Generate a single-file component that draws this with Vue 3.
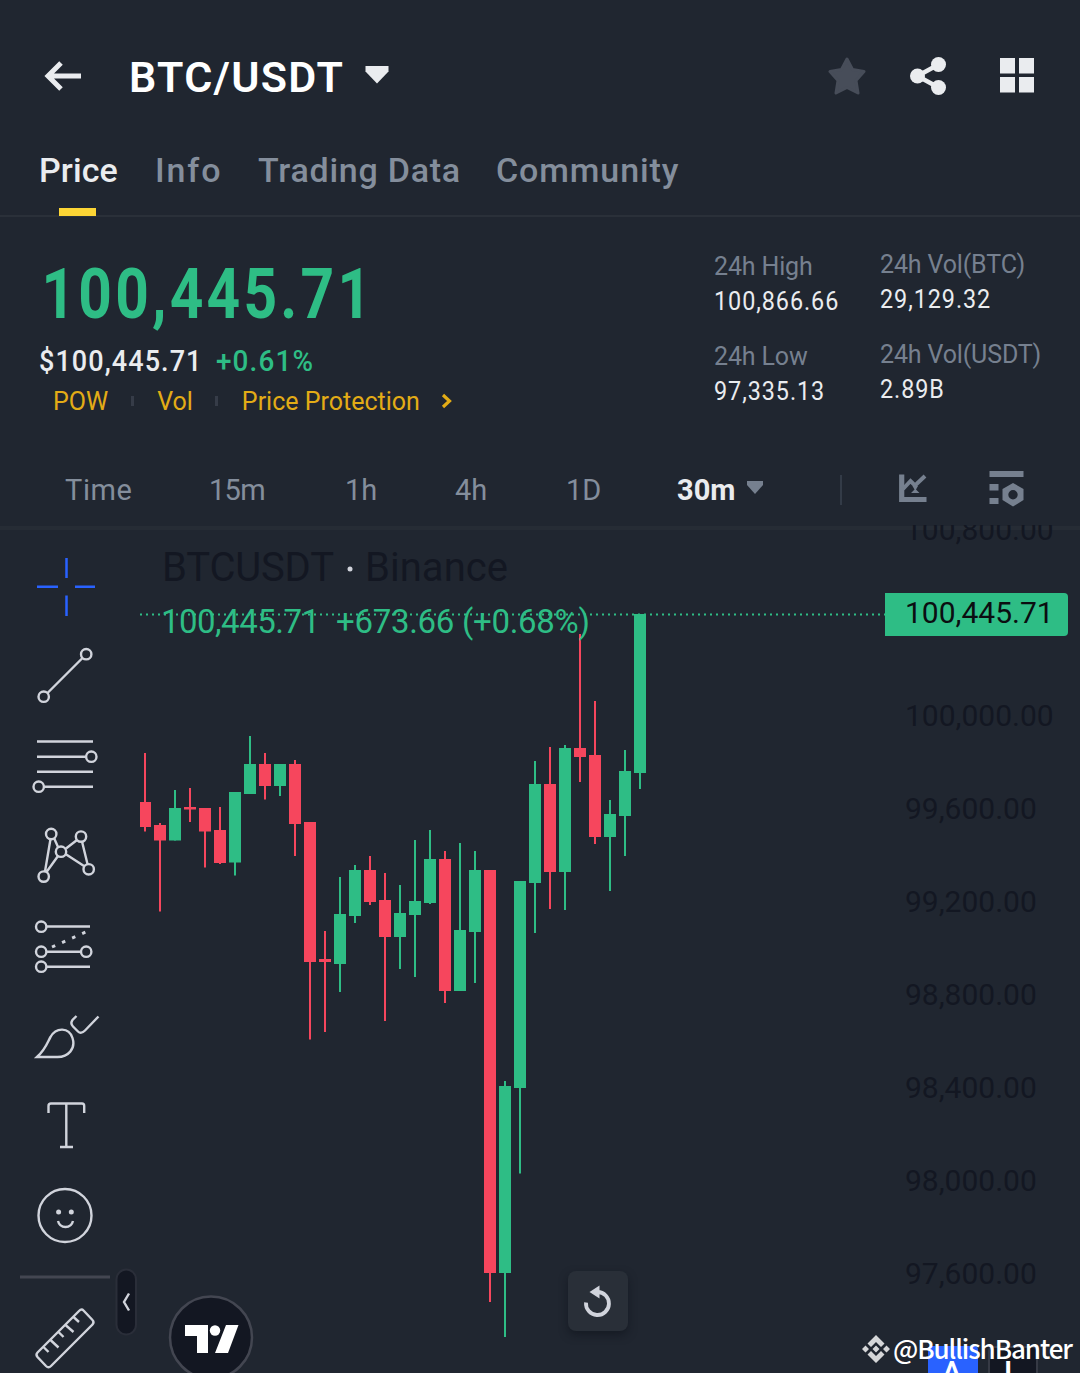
<template>
  <div class="screen">
    <header class="header">
      <svg class="back" width="38" height="32" viewBox="0 0 38 32">
        <path d="M17 3 L4 16 L17 29 M4 16 H37" fill="none" stroke="#eaecef" stroke-width="5" />
      </svg>
      <h1 class="pair">BTC/USDT</h1>
      <svg class="pair-caret" width="24" height="19" viewBox="0 0 24 19">
        <path d="M0.500 1 H23.500 V6.500 L12 18.500 L0.500 6.500 Z" fill="#eaecef" />
      </svg>
      <div class="actions">
        <svg width="38" height="40" viewBox="0 0 38 40">
          <path d="M19 3 L24.500 13.500 L36 15.500 L28 24.500 L30 37 L19 31.500 L8 37 L10 24.500 L2 15.500 L13.500 13.500 Z" fill="#474d59" stroke="#474d59" stroke-width="3" stroke-linejoin="round" />
        </svg>
        <svg width="36" height="38" viewBox="0 0 36 38">
          <path d="M28.500 7.500 L7.500 19 L28.500 30.500" fill="none" stroke="#eaecef" stroke-width="4.500" />
          <circle cx="28.500" cy="7.500" r="7.500" fill="#eaecef" />
          <circle cx="7.500" cy="19" r="7.500" fill="#eaecef" />
          <circle cx="28.500" cy="30.500" r="7.500" fill="#eaecef" />
        </svg>
        <svg class="grid-icon" width="34" height="35" viewBox="0 0 34 35">
          <path d="M0 0 H15 V15.500 H0 Z M19 0 H34 V15.500 H19 Z M0 19 H15 V34.500 H0 Z M19 19 H34 V34.500 H19 Z" fill="#eaecef" />
        </svg>
      </div>
    </header>

    <nav class="tabs">
      <a v-for="tab in tabs" :key="tab.name" :class="['tab', tab.cls, { active: tab.name === 'Price' }]">{{ tab.name }}</a>
    </nav>

    <section class="ticker">
      <div class="ticker-main">
        <div class="price">100,445.71</div>
        <div class="fiat">
          <span class="usd">$100,445.71</span>
          <span class="change">+0.61%</span>
        </div>
        <div class="tags">
          <span>POW</span>
          <i></i>
          <span>Vol</span>
          <i></i>
          <span>Price Protection</span>
          <svg width="12" height="16" viewBox="0 0 12 16">
            <path d="M2 2 L8.500 8 L2 14" fill="none" stroke="#e3ac16" stroke-width="3.200" />
          </svg>
        </div>
      </div>
      <div class="stats">
        <div v-for="(column, index) in stats" :key="index" class="stat-column">
          <dl v-for="stat in column" :key="stat.label">
            <dt>{{ stat.label }}</dt>
            <dd>{{ stat.value }}</dd>
          </dl>
        </div>
      </div>
    </section>

    <div class="intervals">
      <span class="interval i-time">Time</span>
      <span class="interval i-15m">15m</span>
      <span class="interval i-1h">1h</span>
      <span class="interval i-4h">4h</span>
      <span class="interval i-1d">1D</span>
      <span class="interval i-30m">30m</span>
      <svg class="caret" width="16" height="13" viewBox="0 0 16 13">
        <path d="M0 0 H16 V4 L8 13 L0 4 Z" fill="#76808f" />
      </svg>
      <i class="divider"></i>
      <svg class="chart-icon" width="28" height="29" viewBox="0 0 28 29">
        <path d="M2.700 0.500 V25.500 H27.500" fill="none" stroke="#76808f" stroke-width="5.200" />
        <path d="M4 15 L11.500 7 L16 11.500 L26 2" fill="none" stroke="#76808f" stroke-width="4" />
        <path d="M13.500 12 H19 L17 15.500 L20.500 19 H12 L15.500 15.500 Z" fill="#76808f" />
      </svg>
      <svg class="settings-icon" width="36" height="36" viewBox="0 0 36 36">
        <path d="M0.500 0 H34.500 V6 H0.500 Z M0.500 13 H9.500 V19.500 H0.500 Z M0.500 27 H9.500 V33 H0.500 Z" fill="#76808f" />
        <path fill-rule="evenodd" d="M24 12 L34.500 18 V29 L24 35.500 L13.500 29 V18 Z M24 19 A4.700 4.700 0 1 0 24 28.400 A4.700 4.700 0 1 0 24 19 Z" fill="#76808f" />
      </svg>
    </div>

    <main class="chart">
      <aside class="tools">
        <svg width="138" height="843" viewBox="0 530 138 843" fill="none" stroke="#d1d4dc" stroke-width="2.400">
          <!-- crosshair -->
          <path d="M66.500 558 V578 M66.500 595.500 V616 M37 586.800 H58 M75 586.800 H95" stroke="#2962ff" stroke-width="2.500" />

          <!-- trend line -->
          <path d="M47.500 693 L82.500 658" />
          <circle cx="43.700" cy="696.700" r="5.200" />
          <circle cx="86.200" cy="654.200" r="5.200" />

          <!-- fib retracement -->
          <path d="M37 741.500 H93 M37 756.700 H86 M37 771.700 H93 M44 786.700 H93" />
          <circle cx="91.300" cy="756.700" r="5.200" />
          <circle cx="38.700" cy="786.700" r="5.200" />

          <!-- pattern -->
          <path d="M50.500 839 L45 871.500 M54 838 L58 847 M58 856 L46.500 872 M66 848.500 L77 840 M65.500 854 L84 866 M82 841.500 L87.500 864" />
          <circle cx="51.200" cy="834" r="5.200" />
          <circle cx="81" cy="836.600" r="5.200" />
          <circle cx="61" cy="851.700" r="5.200" />
          <circle cx="43.700" cy="876.600" r="5.200" />
          <circle cx="88.700" cy="869.300" r="5.200" />

          <!-- projection -->
          <path d="M46.500 926.500 H90 M46.500 951.800 H81 M46.500 966.700 H90" />
          <path d="M52 947 L88 931" stroke-width="3" stroke-dasharray="3.500 7.500" />
          <circle cx="41.200" cy="926.700" r="5.200" />
          <circle cx="41.200" cy="951.700" r="5.200" />
          <circle cx="86.200" cy="951.700" r="5.200" />
          <circle cx="41.200" cy="966.700" r="5.200" />

          <!-- brush -->
          <path d="M37 1057 C46 1049 48 1041 50.500 1037 C56 1027 69 1027 72.500 1038 C76 1049 68 1057 57.500 1057 Z M76.500 1016 L72.500 1020 Q70 1023.500 73 1026.500 L78 1031.500 Q81 1034.500 85 1030.500 L98.500 1016.500" />

          <!-- text -->
          <path d="M48.500 1113 V1106 Q48.500 1103.500 51 1103.500 H82 Q84.200 1103.500 84.200 1106 V1113 M66.300 1104 V1146.500 M60 1147 H73" />

          <!-- emoji -->
          <circle cx="65" cy="1215.500" r="26.500" />
          <path d="M58 1221 C60 1229 71 1229 73 1221" />
          <circle cx="58.600" cy="1212" r="2.500" fill="#d1d4dc" stroke="none" />
          <circle cx="71.300" cy="1212" r="2.500" fill="#d1d4dc" stroke="none" />

          <!-- ruler -->
          <path d="M20 1277 H110" stroke="#434651" stroke-width="3" />
          <path d="M37.500 1352.500 Q35.500 1354.500 37.500 1357 L46 1366 Q48.500 1368.500 51 1366 L92.500 1324.500 Q94.500 1322 92.500 1320 L83.500 1310.500 Q81.500 1308.500 79 1311 Z M43.500 1347 L48.500 1352 M50.500 1340 L58.500 1347.500 M58.500 1332 L63.500 1337 M65.500 1325 L73.500 1332 M73.500 1317 L79 1322" />

          <!-- collapse handle -->
          <rect x="116.500" y="1269.500" width="19.500" height="65" rx="9.750" fill="#131722" stroke="#2a2e39" stroke-width="2" />
          <path d="M129 1293.500 L124 1302 L129 1310.500" />
        </svg>
      </aside>

      <svg class="plot" width="950" height="848" viewBox="130 525 950 848">
        <path d="M140 614.500 H885" stroke="#2ebd85" stroke-width="2" stroke-dasharray="2 4" />
        <g v-for="candle in candles" :key="candle.x" :fill="candle.up ? '#2ebd85' : '#f6465d'">
          <rect :x="candle.x - 1" :y="candle.high" width="2" :height="candle.low - candle.high" />
          <rect :x="candle.left" :y="candle.top" :width="candle.x + 6 - candle.left" :height="candle.bottom - candle.top" />
        </g>

        <g class="legend">
          <text class="symbol" x="162" y="580.500" textLength="172">BTCUSDT</text>
          <circle cx="350" cy="569" r="2.500" fill="#d1d4dc" />
          <text class="symbol" x="365" y="580.500" textLength="143">Binance</text>
          <text class="quote" x="161" y="632.500" textLength="159">100,445.71</text>
          <text class="quote" x="336" y="632.500" textLength="254">+673.66 (+0.68%)</text>
        </g>

        <g class="axis">
          <text v-for="label in axis" :key="label.text" x="905" :y="label.y">{{ label.text }}</text>
          <path d="M885 593 H1064 Q1068 593 1068 597 V632 Q1068 636 1064 636 H885 Z" fill="#2ebd85" />
          <text class="last" x="905" y="622.500">100,445.71</text>
        </g>

        <circle cx="211" cy="1337.500" r="41" fill="#131722" stroke="#434651" stroke-width="2.500" />
        <path d="M185 1325 H208 V1353 H197 V1336 H185 Z M226 1325 H238.500 L228 1353 H215 Z" fill="#fff" />
        <circle cx="215" cy="1330.500" r="5.200" fill="#fff" />

        <g class="mode">
          <rect x="928" y="1346" width="50" height="34" rx="4" fill="#2962ff" />
          <rect x="989" y="1347" width="48" height="34" rx="4" fill="#131722" stroke="#363a45" stroke-width="2" />
          <text x="941.500" y="1383">A</text>
          <text x="1004" y="1383">L</text>
        </g>

        <g class="watermark">
          <g fill="#d5d6d8">
            <path d="M876 1335 L884.500 1343.500 L881 1347 L876 1342 L871 1347 L867.500 1343.500 Z" />
            <path d="M876 1363 L884.500 1354.500 L881 1351 L876 1356 L871 1351 L867.500 1354.500 Z" />
            <path d="M876 1345.500 L879.500 1349 L876 1352.500 L872.500 1349 Z M865.500 1345.500 L869 1349 L865.500 1352.500 L862 1349 Z M886.500 1345.500 L890 1349 L886.500 1352.500 L883 1349 Z" />
          </g>
          <text x="893" y="1358.500" textLength="180">@BullishBanter</text>
        </g>
      </svg>

      <button class="reset">
        <svg width="30" height="34" viewBox="0 0 30 34">
          <path d="M3 18.500 A11.500 11.500 0 1 0 14.500 8" fill="none" stroke="#d1d4dc" stroke-width="3.800" />
          <path d="M6.500 8 L16.500 1.500 V14.500 Z" fill="#d1d4dc" />
        </svg>
      </button>
    </main>
  </div>
</template>

<script setup>
const tabs = [
  { name: 'Price', cls: 'tab-price' },
  { name: 'Info', cls: 'tab-info' },
  { name: 'Trading Data', cls: 'tab-data' },
  { name: 'Community', cls: 'tab-community' }
]

const stats = [
  [
    { label: '24h High', value: '100,866.66' },
    { label: '24h Low', value: '97,335.13' }
  ],
  [
    { label: '24h Vol(BTC)', value: '29,129.32' },
    { label: '24h Vol(USDT)', value: '2.89B' }
  ]
]

// up, high, body top, body bottom, low
const series = [
  [0, 753, 802, 827, 831.5],
  [0, 823, 825, 840.5, 911.5],
  [1, 790, 808, 840.5, 840.5],
  [0, 788, 807, 809.5, 822],
  [0, 808, 808, 831.5, 867.5],
  [0, 807, 830, 863, 864],
  [1, 792, 792, 862.5, 875.5],
  [1, 736, 764, 794, 794],
  [0, 753, 764, 786, 799.5],
  [1, 764, 764, 786, 796],
  [0, 760, 764, 824, 856],
  [0, 822, 822, 962, 1039.5],
  [0, 931, 959, 962, 1032],
  [1, 877, 914, 964, 992],
  [1, 865, 870, 916, 923],
  [0, 856, 870, 902, 905],
  [0, 873, 900, 937, 1021],
  [1, 885, 913, 937, 969],
  [1, 840, 901, 915, 977],
  [1, 830, 859, 903, 904],
  [0, 851, 859, 991, 1003],
  [1, 843, 930, 991, 991],
  [1, 851, 870, 932, 983],
  [0, 870, 870, 1273, 1302],
  [1, 1081, 1086, 1273, 1337],
  [1, 881, 881, 1088, 1173.5],
  [1, 761, 784, 883, 933],
  [0, 747, 784, 872, 909],
  [1, 745, 748, 872, 910],
  [0, 634, 748, 757, 782],
  [0, 701, 755, 837, 844],
  [1, 800, 814, 837, 891],
  [1, 750, 771, 816, 856],
  [1, 614, 614, 773, 789]
]

const candles = series.map(([up, high, top, bottom, low], index) => {
  const x = 145 + index * 15
  return { x, up, high, top, bottom, low, left: Math.max(x - 6, 140) }
})

const axis = [
  { text: '100,800.00', y: 539.5 },
  { text: '100,000.00', y: 725.5 },
  { text: '99,600.00', y: 818.5 },
  { text: '99,200.00', y: 911.5 },
  { text: '98,800.00', y: 1004.5 },
  { text: '98,400.00', y: 1097.5 },
  { text: '98,000.00', y: 1190.5 },
  { text: '97,600.00', y: 1283.5 }
]
</script>

<style>
body {
  background: #202630;
}
</style>

<style scoped>
* {
  box-sizing: border-box;
}

.screen {
  width: 1080px;
  height: 1373px;
  overflow: hidden;
  background: #202630;
  color: #eaecef;
  font-family: Roboto, "Liberation Sans", sans-serif;
}

svg {
  display: block;
  flex: none;
}

/* header */
.header {
  display: flex;
  align-items: center;
  height: 152px;
  padding: 0 46px 0 44px;
}

.pair {
  width: 235px;
  margin: 2px 0 0 47px;
  color: #fff;
  font-size: 43px;
  font-weight: 600;
  letter-spacing: 1.3px;
  white-space: nowrap;
}

.pair-caret {
  margin: -3px 0 0 1px;
}

.actions {
  display: flex;
  align-items: center;
  gap: 44px;
  margin: -1px 0 0 auto;
}

.grid-icon {
  margin-left: 10px;
}

/* tabs */
.tabs {
  display: flex;
  height: 65px;
  padding-left: 39px;
  border-bottom: 2px solid #2a3039;
}

.tab {
  position: relative;
  color: #848e9c;
  font-size: 34px;
  font-weight: 500;
  line-height: 37px;
  white-space: nowrap;
}

.tab-price { width: 116px; letter-spacing: 0.1px; }
.tab-info { width: 103px; letter-spacing: 1.9px; }
.tab-data { width: 238px; letter-spacing: 0.75px; }
.tab-community { letter-spacing: 0.9px; }

.tab.active {
  color: #eaecef;
}

.tab.active::after {
  content: "";
  position: absolute;
  left: 20px;
  bottom: -1px;
  width: 37px;
  height: 8px;
  background: #fcd535;
}

/* ticker */
.ticker {
  display: flex;
  justify-content: space-between;
  height: 237px;
}

.ticker-main {
  width: 500px;
  padding: 33px 0 0 39px;
}

.price {
  height: 90px;
  padding-left: 3px;
  color: #2ebd85;
  font-size: 71px;
  font-weight: 700;
  line-height: 88px;
  letter-spacing: 3.9px;
  transform: scaleX(0.826);
  transform-origin: left;
}

.fiat {
  display: flex;
  height: 42px;
  font-size: 30px;
  font-weight: 500;
  line-height: 42px;
  letter-spacing: 1.2px;
}

.fiat span {
  transform: scaleX(0.9);
  transform-origin: left;
}

.usd {
  width: 177px;
  white-space: nowrap;
}

.fiat .change {
  color: #2ebd85;
  transform: scaleX(0.93);
}

.tags {
  display: flex;
  align-items: center;
  height: 38px;
  padding-left: 14px;
  color: #e3ac16;
  font-size: 25px;
}

.tags i {
  width: 3px;
  height: 10px;
  margin: 0 23.5px 0 22.5px;
  background: #363c48;
}

.tags svg {
  margin-left: 21px;
}

.stats {
  display: flex;
  width: 366px;
}

.stat-column {
  width: 166px;
  padding-top: 32px;
}

.stat-column + .stat-column {
  width: 200px;
  padding-top: 30px;
}

dl {
  height: 90px;
  margin: 0;
  font-size: 25px;
  line-height: 35px;
  white-space: nowrap;
}

dt {
  color: #76808f;
  letter-spacing: -0.15px;
}

dd {
  margin: 0;
  letter-spacing: 1px;
  transform: scaleX(0.935);
  transform-origin: left;
}

/* intervals */
.intervals {
  display: flex;
  align-items: center;
  height: 76px;
  padding-bottom: 1px;
  border-bottom: 4px solid #262c35;
  color: #848e9c;
  font-size: 29px;
}

.interval {
  flex: none;
  white-space: nowrap;
}

.i-time { width: 144px; margin-left: 65px; letter-spacing: 0.6px; }
.i-15m { width: 136px; letter-spacing: -0.7px; }
.i-1h { width: 110px; }
.i-4h { width: 111px; }
.i-1d { width: 111px; }
.i-30m { width: 70px; color: #eaecef; font-weight: 700; }

.caret {
  margin-top: -5px;
}

.divider {
  width: 2px;
  height: 30px;
  margin: 0 57px 0 77px;
  background: #333b47;
}

.chart-icon {
  margin-top: -2px;
}

.settings-icon {
  margin: -1px 0 0 62px;
}

/* chart */
.chart {
  position: relative;
  display: flex;
  align-items: flex-start;
  height: 843px;
}

.tools {
  width: 130px;
}

.plot {
  margin-top: -5px;
}

.legend .symbol {
  fill: #131722;
  font-size: 40px;
}

.legend .quote {
  fill: #2ebd85;
  font-size: 33px;
}

.axis text {
  fill: #131722;
  font-size: 30px;
}

.axis .last {
  fill: #0b0e11;
}

.mode text {
  fill: #fff;
  font-size: 31px;
  font-weight: 500;
}

.watermark text {
  fill: #fff;
  font-family: "Noto Sans CJK SC", "Noto Sans", sans-serif;
  font-size: 26px;
  font-weight: 500;
}

.reset {
  position: absolute;
  left: 568px;
  top: 741px;
  display: grid;
  place-items: center;
  width: 60px;
  height: 60px;
  padding: 0;
  border: 0;
  border-radius: 8px;
  background: #292f38;
  box-shadow: 0 4px 8px rgba(12, 15, 24, 0.5);
}
</style>
